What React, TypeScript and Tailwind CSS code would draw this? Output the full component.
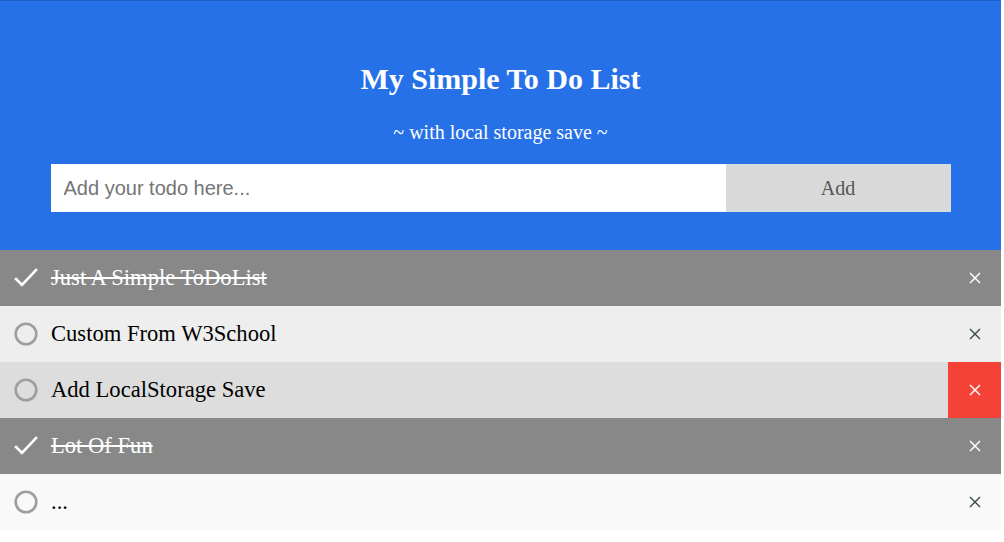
import React from "react";

type Item = { text: string; checked: boolean; bg: string; closeBg?: string };

const items: Item[] = [
  { text: "Just A Simple ToDoList", checked: true, bg: "bg-[#888888]" },
  { text: "Custom From W3School", checked: false, bg: "bg-[#eeeeee]" },
  { text: "Add LocalStorage Save", checked: false, bg: "bg-[#dddddd]", closeBg: "bg-[#f44336]" },
  { text: "Lot Of Fun", checked: true, bg: "bg-[#888888]" },
  { text: "...", checked: false, bg: "bg-[#f9f9f9]" },
];

function Check() {
  return (
    <svg width="26" height="22" viewBox="0 0 26 22" className="block">
      <polyline points="3,12 9,18 23,3" fill="none" stroke="#ffffff" strokeWidth="2.6" strokeLinecap="square" />
    </svg>
  );
}

function Circle() {
  return (
    <svg width="26" height="26" viewBox="0 0 26 26" className="block">
      <circle cx="13" cy="13" r="10.3" fill="none" stroke="#9e9e9e" strokeWidth="2.6" />
    </svg>
  );
}

function Close({ light }: { light: boolean }) {
  const c = light ? "#ffffff" : "#3d4a50";
  return (
    <svg width="12" height="12" viewBox="0 0 12 12" className="block">
      <line x1="1" y1="1" x2="11" y2="11" stroke={c} strokeWidth="1.4" />
      <line x1="11" y1="1" x2="1" y2="11" stroke={c} strokeWidth="1.4" />
    </svg>
  );
}

export default function App() {
  return (
    <div className="w-[1001px] bg-white" style={{ fontFamily: '"Liberation Serif", "Times New Roman", serif' }}>
      <div className="border-t border-[#1f5fc9] bg-[#2670e8] pt-[60px] pb-[38px] flex flex-col items-center">
        <h1 className="h-[36px] leading-[36px] text-[30px] font-bold text-white">My Simple To Do List</h1>
        <p className="mt-[23px] h-[24px] leading-[24px] text-[20px] text-white">~ with local storage save ~</p>
        <div className="mt-[20px] flex w-[900px] h-[48px]">
          <input
            className="flex-1 h-full bg-white px-[13px] text-[20px] text-black placeholder-[#757575] outline-none"
            style={{ fontFamily: '"Liberation Sans", Arial, sans-serif' }}
            placeholder="Add your todo here..."
          />
          <button className="w-[225px] h-full bg-[#d9d9d9] text-[20px] text-[#555555]">Add</button>
        </div>
      </div>
      <ul>
        {items.map((it, i) => (
          <li key={i} className={`flex items-center h-[56px] ${it.bg}`}>
            <div className="w-[51px] flex justify-center pl-[1px]">
              {it.checked ? <Check /> : <Circle />}
            </div>
            <span
              className={`flex-1 text-[22.6px] ${it.checked ? "text-white line-through decoration-white" : "text-black"}`}
            >
              {it.text}
            </span>
            <div className={`w-[53px] h-full flex items-center justify-center ${it.closeBg ?? ""}`}>
              <Close light={it.checked || !!it.closeBg} />
            </div>
          </li>
        ))}
      </ul>
    </div>
  );
}
